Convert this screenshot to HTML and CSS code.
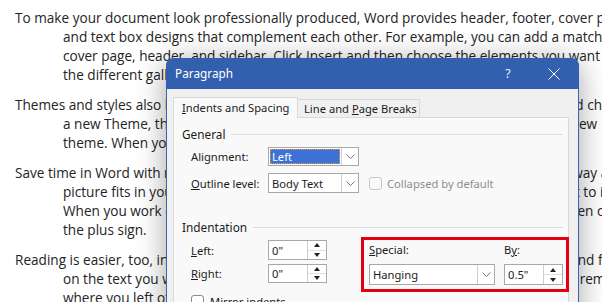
FILE: index.html
```html
<!DOCTYPE html>
<html>
<head>
<meta charset="utf-8">
<link rel="stylesheet" href="styles.css">
</head>
<body>
<div class="doc">
  <p>To make your document look professionally produced, Word provides header, footer, cover page,<br>and text box designs that complement each other. For example, you can add a matching<br>cover page, header, and sidebar. Click Insert and then choose the elements you want from<br>the different galleries.</p>
  <p>Themes and styles also help keep your document coordinated. When you click Design and choose<br>a new Theme, the pictures, charts, and SmartArt graphics change to match your new<br>theme. When you apply styles, your headings change to match the new theme.</p>
  <p>Save time in Word with new buttons that show up where you need them. To change the way a<br>picture fits in your document, click it and a button for layout options appears next to it.<br>When you work on a table, click where you want to add a row or a column, and then click<br>the plus sign.</p>
  <p>Reading is easier, too, in the new Reading view. You can collapse parts of the document and focus<br>on the text you want. If you need to stop reading before you reach the end, Word remembers<br>where you left off - even on another device.</p>
</div>

<div class="dialog">
  <div class="titlebar">
    <span class="title">Paragraph</span>
    <span class="tbtn help">?</span>
    <span class="tbtn close"><svg width="12" height="12" viewBox="0 0 12 12"><path d="M0.5 0.5L11.5 11.5M11.5 0.5L0.5 11.5" stroke="#fff" stroke-width="1" fill="none"/></svg></span>
  </div>
  <div class="dbody">
    <div class="tabs">
      <div class="tab active"><u>I</u>ndents and Spacing</div>
      <div class="tab">Line and <u>P</u>age Breaks</div>
    </div>
    <div class="panel">
      <div class="group-title"><span>General</span><span class="rule"></span></div>
      <div class="row r-align">
        <span class="label">Ali<u>g</u>nment:</span>
        <span class="select w91"><span class="val"><span class="hl">Left</span></span><span class="arrow"><svg width="9" height="5" viewBox="0 0 9 5"><path d="M0.5 0.5L4.5 4.5L8.5 0.5" stroke="#777" fill="none"/></svg></span></span>
      </div>
      <div class="row r-outline">
        <span class="label"><u>O</u>utline level:</span>
        <span class="select w91"><span class="val">Body Text</span><span class="arrow"><svg width="9" height="5" viewBox="0 0 9 5"><path d="M0.5 0.5L4.5 4.5L8.5 0.5" stroke="#777" fill="none"/></svg></span></span>
        <span class="check disabled"></span>
        <span class="dim">Collapsed by default</span>
      </div>
      <div class="group-title g2"><span>Indentation</span><span class="rule"></span></div>
      <div class="indent">
        <div class="indent-left">
          <div class="row r-left">
            <span class="label"><u>L</u>eft:</span>
            <span class="spin w59"><span class="val">0"</span><span class="spinbtn"><span class="up"></span><span class="dn"></span></span></span>
          </div>
          <div class="row r-right">
            <span class="label"><u>R</u>ight:</span>
            <span class="spin w59"><span class="val">0"</span><span class="spinbtn"><span class="up"></span><span class="dn"></span></span></span>
          </div>
        </div>
        <div class="special">
          <div class="col c1">
            <div class="slabel"><u>S</u>pecial:</div>
            <span class="select w126"><span class="val">Hanging</span><span class="arrow"><svg width="9" height="5" viewBox="0 0 9 5"><path d="M0.5 0.5L4.5 4.5L8.5 0.5" stroke="#777" fill="none"/></svg></span></span>
          </div>
          <div class="col c2">
            <div class="slabel">B<u>y</u>:</div>
            <span class="spin w59 h21"><span class="val">0.5"</span><span class="spinbtn"><span class="up"></span><span class="dn"></span></span></span>
          </div>
        </div>
      </div>
      <div class="row r-mirror">
        <span class="check"></span>
        <span>Mirror indents</span>
      </div>
    </div>
  </div>
</div>
</body>
</html>
```

FILE: styles.css
```css
html, body {
  margin: 0;
  padding: 0;
}
body {
  width: 602px;
  height: 302px;
  overflow: hidden;
  position: relative;
  background: #fff;
  font-family: "Open Sans", "Noto Sans", sans-serif;
  font-size: 13.6px;
  line-height: 19px;
  color: #242424;
}
.doc {
  padding: 8px 0 0 15px;
}
.doc p {
  margin: 0 0 11px 0;
  padding-left: 48px;
  text-indent: -48px;
  white-space: nowrap;
}

.dialog {
  position: absolute;
  left: 166px;
  top: 58px;
  width: 411px;
  height: 260px;
  background: #f0f0f0;
  border: 1px solid #3a64b2;
  border-top: none;
  border-radius: 8px 8px 0 0;
  box-shadow: 0 4px 30px rgba(0, 0, 0, 0.36);
  font-family: "Noto Sans", "Open Sans", sans-serif;
  font-size: 11.2px;
  color: #1b1b1b;
}
.titlebar {
  height: 31px;
  background: #325fae;
  border-radius: 8px 8px 0 0;
  margin: 0 -1px;
  display: flex;
  align-items: center;
  color: #fff;
}
.title {
  flex: 1;
  padding-left: 9px;
  font-size: 11.8px;
  padding-bottom: 1px;
}
.tbtn {
  width: 46px;
  height: 31px;
  display: flex;
  align-items: center;
  justify-content: center;
}
.help {
  font-size: 12.5px;
  color: #e8eef8;
}
.close {
  padding-right: 2px;
}
.dbody {
  padding: 8px 9px 0 6px;
}
.tabs {
  display: flex;
  align-items: flex-end;
  height: 21px;
  position: relative;
  z-index: 1;
  margin-bottom: -1px;
  white-space: nowrap;
}
.tab {
  box-sizing: border-box;
  height: 18px;
  line-height: 17px;
  width: 123px;
  padding-left: 6px;
  border: 1px solid #d9d9d9;
  border-bottom: none;
  background: #f0f0f0;
  margin-left: -1px;
  white-space: nowrap;
  overflow: hidden;
}
.tab.active {
  height: 21px;
  line-height: 20px;
  width: 125px;
  padding-left: 8px;
  margin-left: 0;
  background: #f9f9f9;
  position: relative;
  z-index: 2;
}
.tabs .tab:nth-child(2) {
  margin-bottom: 1px;
}
.panel {
  box-sizing: border-box;
  width: 396px;
  height: 200px;
  border: 1px solid #d9d9d9;
  background: #f9f9f9;
  padding: 0 5px 0 8px;
}
.group-title {
  display: flex;
  align-items: center;
  height: 16px;
  margin-top: 8px;
  font-size: 11.8px;
}
.group-title .rule {
  flex: 1;
  height: 1px;
  background: #dcdcdc;
  margin-left: 6px;
}
.group-title.g2 {
  margin-top: 26px;
}
.row {
  display: flex;
  align-items: center;
  white-space: nowrap;
}
.label {
  width: 77px;
  padding-left: 9px;
  flex-shrink: 0;
}
.r-align {
  margin-top: 5px;
  height: 19px;
}
.r-outline {
  margin-top: 7px;
  height: 20px;
}
.select, .spin {
  box-sizing: border-box;
  display: flex;
  height: 100%;
  border: 1px solid #a8a8a8;
  background: #fff;
  flex-shrink: 0;
}
.w91 { width: 91px; }
.w126 { width: 126px; height: 21px; }
.w59 { width: 59px; }
.h21 { height: 21px; }
.select .val, .spin .val {
  flex: 1;
  display: flex;
  align-items: center;
  padding-left: 3px;
  white-space: nowrap;
  overflow: hidden;
}
.hl {
  display: flex;
  align-items: center;
  align-self: stretch;
  flex: 1;
  margin: 1px 1px 1px -2px;
  padding-left: 2px;
  background: #3d71d6;
  color: #fff;
  outline: 1px dotted #e89a3c;
  outline-offset: -1px;
}
.select .arrow {
  width: 16px;
  border-left: 1px solid #cfcfcf;
  display: flex;
  align-items: center;
  justify-content: center;
}
.check {
  box-sizing: border-box;
  width: 13px;
  height: 13px;
  border: 1px solid #8a8a8a;
  border-radius: 3px;
  background: #fff;
  flex-shrink: 0;
}
.check.disabled {
  border-color: #c6c6c6;
  margin-left: 10px;
  margin-right: 5px;
  background: #fafafa;
}
.dim {
  color: #8e8e8e;
}
.indent {
  display: flex;
  margin-top: 2px;
}
.indent-left {
  margin-top: 3px;
  width: 145px;
  flex-shrink: 0;
}
.r-left {
  height: 20px;
}
.r-right {
  margin-top: 4px;
  height: 19px;
}
.spin .val {
  border-right: 1px solid #cfcfcf;
}
.spinbtn {
  width: 18px;
  display: flex;
  flex-direction: column;
}
.spinbtn .up, .spinbtn .dn {
  flex: 1;
  display: flex;
  align-items: center;
  justify-content: center;
}
.spinbtn .up {
  border-bottom: 1px solid #e2e2e2;
}
.spinbtn .up::after {
  content: "";
  border-left: 3.5px solid transparent;
  border-right: 3.5px solid transparent;
  border-bottom: 4px solid #222;
}
.spinbtn .dn::after {
  content: "";
  border-left: 3.5px solid transparent;
  border-right: 3.5px solid transparent;
  border-top: 4px solid #222;
}
.special {
  box-sizing: border-box;
  width: 208px;
  height: 55px;
  flex-shrink: 0;
  margin-left: 34px;
  border: 3px solid #e5000f;
  padding: 2px 0 0 5px;
  display: flex;
}
.col {
  display: flex;
  flex-direction: column;
}
.c2 {
  margin-left: 9px;
}
.slabel {
  height: 16px;
  line-height: 16px;
  margin-bottom: 6px;
}
.r-mirror {
  margin-top: 2px;
  padding-left: 9px;
  gap: 6px;
  height: 14px;
}
```
